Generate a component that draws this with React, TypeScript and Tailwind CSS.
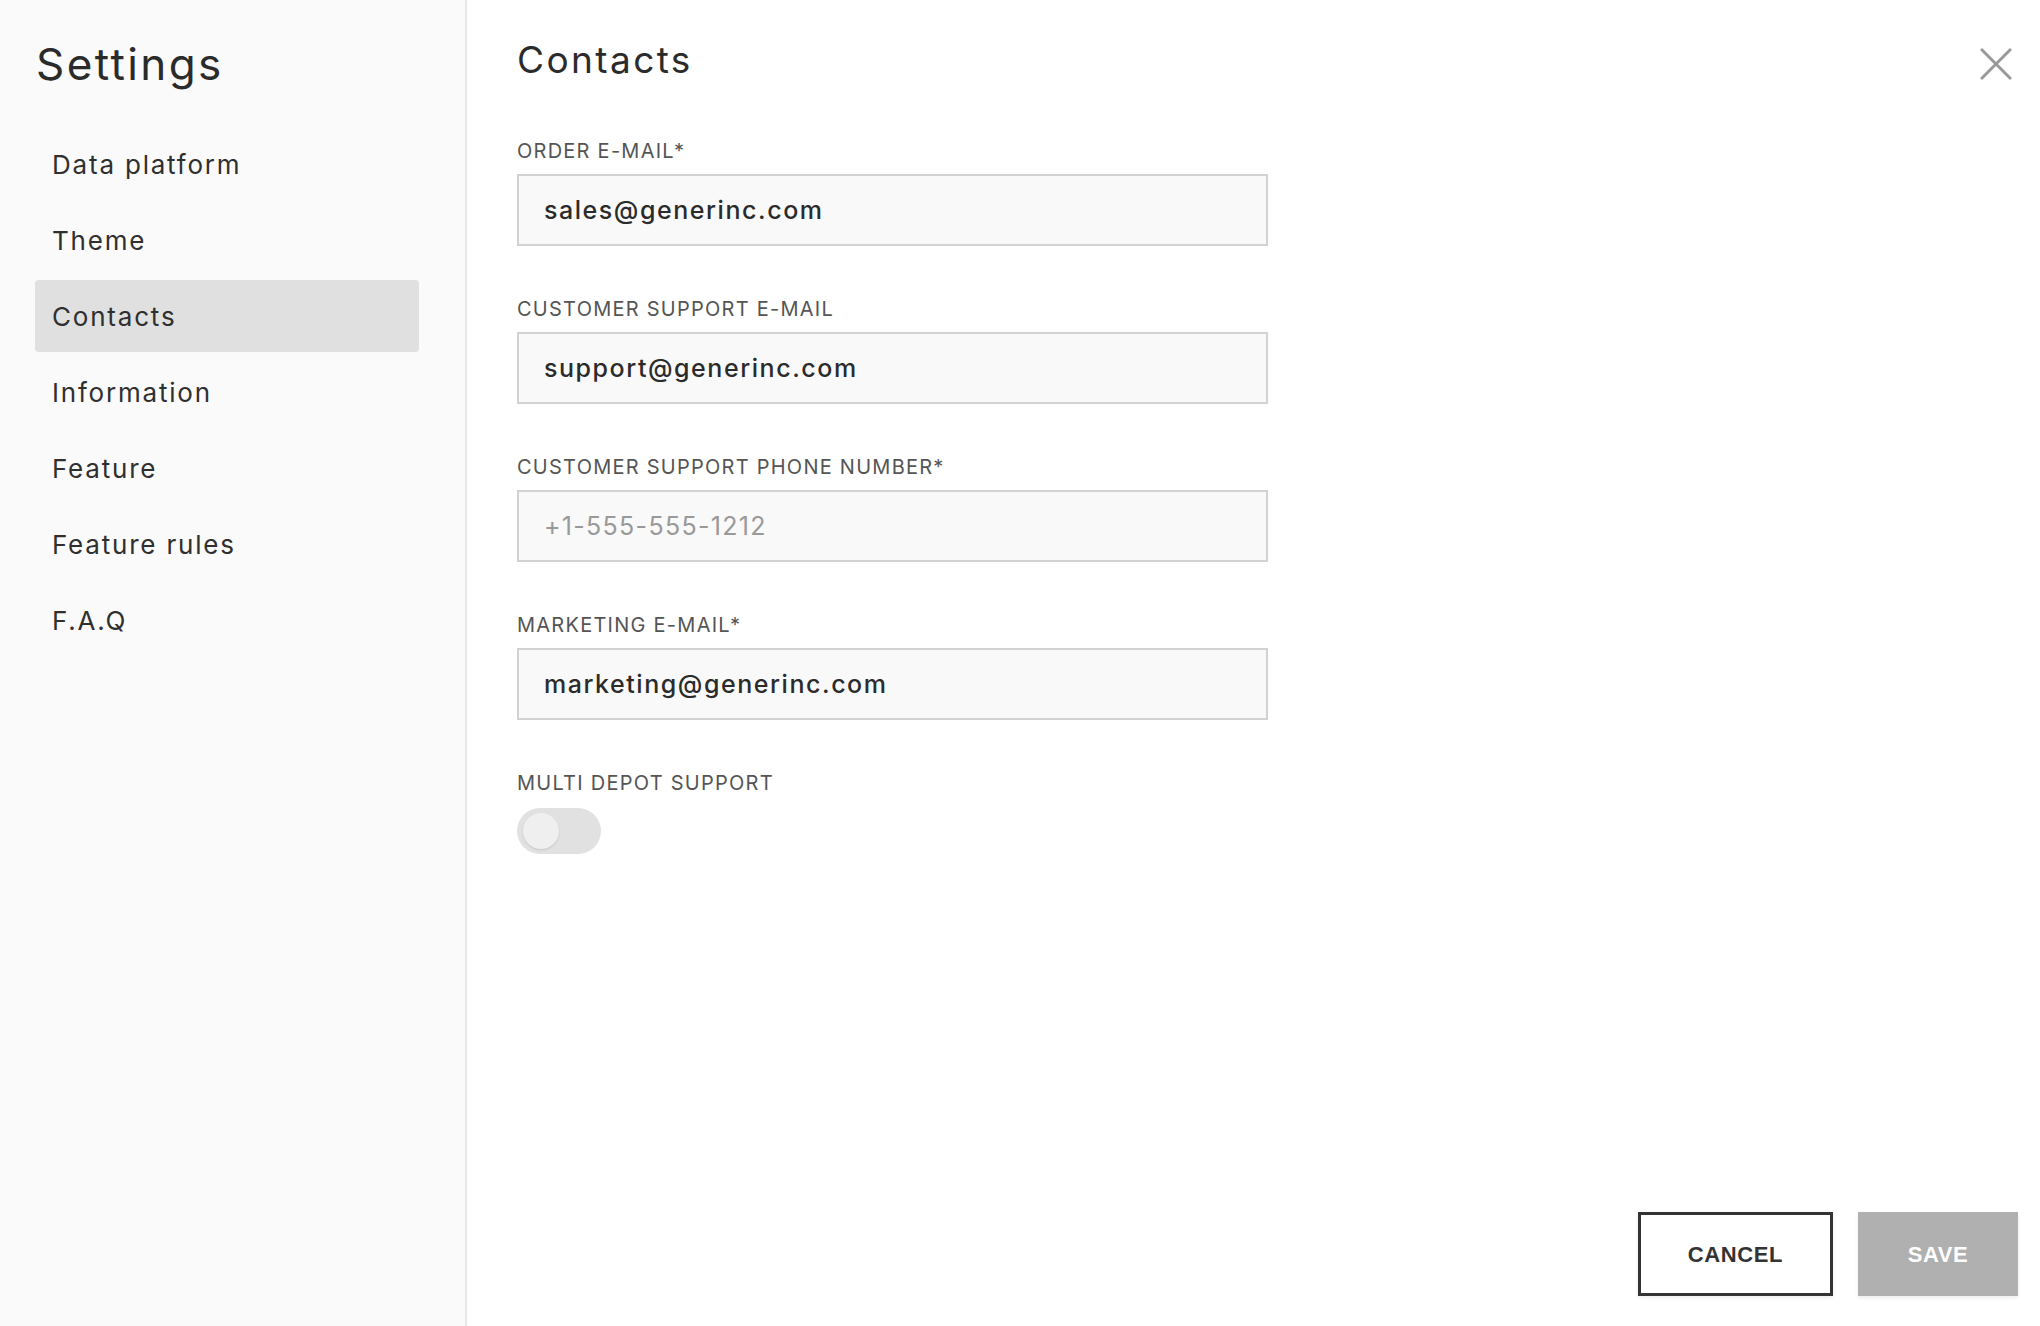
import React from 'react'

const NAV_ITEMS = ['Data platform', 'Theme', 'Contacts', 'Information', 'Feature', 'Feature rules', 'F.A.Q']

const FIELDS = [
  { label: 'ORDER E-MAIL*', value: 'sales@generinc.com' },
  { label: 'CUSTOMER SUPPORT E-MAIL', value: 'support@generinc.com' },
  { label: 'CUSTOMER SUPPORT PHONE NUMBER*', value: '', placeholder: '+1-555-555-1212' },
  { label: 'MARKETING E-MAIL*', value: 'marketing@generinc.com' },
]

function Field({ label, value, placeholder }: { label: string; value: string; placeholder?: string }) {
  return (
    <div className="mb-[51px] flex flex-col">
      <label className="text-[20px] leading-[24px] tracking-[1.25px] text-[#555555]">{label}</label>
      <input
        className="mt-[11px] h-[72px] w-[751px] border-2 border-[#d2d2d2] bg-[#f9f9f9] px-[25px] text-[25px] font-medium tracking-[1.55px] text-[#2b2b2b] outline-none placeholder:font-normal placeholder:tracking-[1.3px] placeholder:text-[#999999]"
        defaultValue={value}
        placeholder={placeholder}
      />
    </div>
  )
}

export default function App() {
  return (
    <div className="flex h-[1326px] w-full bg-white text-[#333333]" style={{ fontFamily: 'Inter, "Noto Sans", sans-serif' }}>
      <aside className="flex w-[467px] shrink-0 flex-col border-r-2 border-[#e8e8e8] bg-[#fafafa] pl-[35px] pt-[38px]">
        <h1 className="ml-[1px] text-[44px] font-normal leading-[52px] tracking-[2.4px] text-[#2b2b2b]">Settings</h1>
        <nav className="mt-[38px] flex flex-col gap-1">
          {NAV_ITEMS.map((item) => (
            <div
              key={item}
              className={`flex h-[72px] w-[384px] items-center rounded-[4px] pl-[17px] text-[26px] tracking-[1.8px] text-[#2f2f2f] ${item === 'Contacts' ? 'bg-[#e0e0e0]' : ''}`}
            >
              {item}
            </div>
          ))}
        </nav>
      </aside>

      <main className="flex flex-1 flex-col pl-[50px] pr-[22px] pt-[38px] pb-[30px]">
        <div className="flex items-start justify-between pr-[6px]">
          <h2 className="text-[37px] font-normal leading-[44px] tracking-[2.4px] text-[#2b2b2b]">Contacts</h2>
          <button className="mt-[10px] h-[32px] w-[32px] text-[#999999]">
            <svg viewBox="0 0 32 32" className="h-[32px] w-[32px]" fill="none" stroke="currentColor" strokeWidth="3">
              <path d="M1 1 L31 31 M31 1 L1 31" />
            </svg>
          </button>
        </div>

        <div className="mt-[57px] flex flex-col">
          {FIELDS.map((f) => (
            <Field key={f.label} {...f} />
          ))}
          <div className="flex flex-col">
            <label className="text-[20px] leading-[24px] tracking-[1.25px] text-[#555555]">MULTI DEPOT SUPPORT</label>
            <div className="mt-[13px] flex h-[46px] w-[84px] items-center rounded-full bg-[#e1e1e1] pl-[6px]">
              <div className="h-[36px] w-[36px] rounded-full bg-[#efefef] shadow-[0_1px_2px_rgba(0,0,0,0.12)]" />
            </div>
          </div>
        </div>

        <div className="mt-auto flex justify-end gap-[25px]" style={{ fontFamily: '"Liberation Sans", Arial, sans-serif' }}>
          <button className="h-[84px] w-[195px] border-[3px] border-[#333333] bg-white text-[22px] font-bold tracking-[0.6px] text-[#333333] shadow-[0_2px_4px_rgba(0,0,0,0.08)]">
            CANCEL
          </button>
          <button className="h-[84px] w-[160px] bg-[#b0b0b0] text-[22px] font-bold tracking-[0.6px] text-white shadow-[0_2px_4px_rgba(0,0,0,0.08)]">
            SAVE
          </button>
        </div>
      </main>
    </div>
  )
}
